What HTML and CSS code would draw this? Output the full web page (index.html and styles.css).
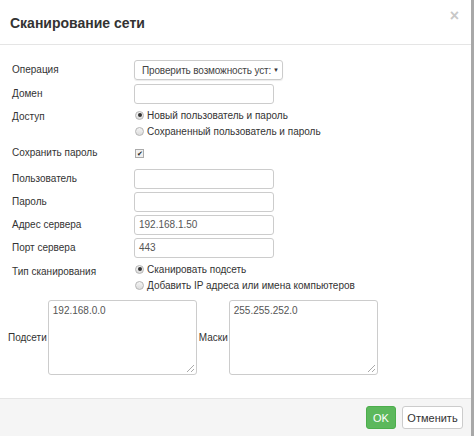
FILE: index.html
```html
<!DOCTYPE html>
<html lang="ru">
<head>
<meta charset="utf-8">
<link rel="stylesheet" href="styles.css">
</head>
<body>
<div class="dialog">
  <div class="header">
    <span class="title">Сканирование сети</span>
    <span class="close">×</span>
  </div>
  <div class="body">
    <div class="row r-op">
      <div class="label">Операция</div>
      <div class="select"><span class="sel-text">Проверить возможность уст:</span><span class="caret">▼</span></div>
    </div>
    <div class="row">
      <div class="label">Домен</div>
      <div class="input"></div>
    </div>
    <div class="row r-radio">
      <div class="label lab-radio">Доступ</div>
      <div class="radios">
        <div class="opt"><span class="radio on"></span>Новый пользователь и пароль</div>
        <div class="opt"><span class="radio"></span>Сохраненный пользователь и пароль</div>
      </div>
    </div>
    <div class="row r-check">
      <div class="label">Сохранить пароль</div>
      <div class="checkwrap"><span class="check">✔</span></div>
    </div>
    <div class="row r-user">
      <div class="label">Пользователь</div>
      <div class="input"></div>
    </div>
    <div class="row">
      <div class="label">Пароль</div>
      <div class="input"></div>
    </div>
    <div class="row">
      <div class="label">Адрес сервера</div>
      <div class="input">192.168.1.50</div>
    </div>
    <div class="row">
      <div class="label">Порт сервера</div>
      <div class="input">443</div>
    </div>
    <div class="row r-radio r-radio2">
      <div class="label lab-radio">Тип сканирования</div>
      <div class="radios">
        <div class="opt"><span class="radio on"></span>Сканировать подсеть</div>
        <div class="opt"><span class="radio"></span>Добавить IP адреса или имена компьютеров</div>
      </div>
    </div>
    <div class="areas">
      <span class="alabel">Подсети</span>
      <div class="textarea">192.168.0.0<span class="grip"></span></div>
      <span class="alabel">Маски</span>
      <div class="textarea">255.255.252.0<span class="grip"></span></div>
    </div>
  </div>
  <div class="footer">
    <button class="btn ok">OK</button>
    <button class="btn cancel">Отменить</button>
  </div>
</div>
</body>
</html>
```
FILE: styles.css
```css
html, body {
  margin: 0;
  padding: 0;
  background: #fff;
}
body {
  font-family: "Liberation Sans", Arial, sans-serif;
  font-size: 10px;
  color: #333;
}
.dialog {
  width: 471px;
  height: 436px;
  border-right: 3px solid #a8a8a8;
  display: flex;
  flex-direction: column;
  background: #fff;
}
.header {
  height: 45px;
  border-bottom: 1px solid #e5e5e5;
  display: flex;
  align-items: center;
  justify-content: space-between;
  padding: 0 12px 0 10px;
  box-sizing: border-box;
  flex: none;
}
.title {
  font-size: 14px;
  font-weight: bold;
  color: #333;
  margin-top: 2px;
}
.close {
  font-size: 16px;
  color: #c8c8c8;
  margin-top: -12px;
  font-weight: bold;
}
.body {
  flex: 1;
  padding: 15px 0 0 12px;
  display: flex;
  flex-direction: column;
  gap: 3px;
}
.row {
  display: grid;
  grid-template-columns: 122px 1fr;
  align-items: center;
  min-height: 20px;
}
.row .label {
  line-height: 20px;
}
.r-op { margin-bottom: 1px; }
.r-radio { align-items: start; }
.row .lab-radio { line-height: 16px; padding-top: 2px; }
.r-radio2 .lab-radio { padding-top: 3px; }
.r-check { margin-top: 1px; }
.r-user { margin-top: 3px; }
.select {
  width: 149px;
  height: 20px;
  box-sizing: border-box;
  border: 1px solid #ccc;
  border-radius: 3px;
  box-shadow: 0 1px 1px rgba(0,0,0,0.08);
  display: flex;
  align-items: center;
  padding: 0 5px 0 7px;
  overflow: hidden;
  white-space: nowrap;
}
.sel-text {
  flex: 1;
  color: #444;
  letter-spacing: -0.15px;
}
.caret {
  font-size: 6px;
  color: #333;
  margin-left: 2px;
}
.input {
  width: 140px;
  height: 20px;
  box-sizing: border-box;
  border: 1px solid #ccc;
  border-radius: 3px;
  padding: 0 4px;
  line-height: 18px;
  color: #555;
}
.radios {
  display: flex;
  flex-direction: column;
  margin-left: 1px;
}
.opt {
  height: 16px;
  display: flex;
  align-items: center;
  white-space: nowrap;
}
.r-radio2 .opt { height: 16.5px; }
.radio {
  width: 7px;
  height: 7px;
  border-radius: 50%;
  border: 1px solid #b5b5b5;
  background: linear-gradient(#f4f4f4, #dcdcdc);
  margin-right: 3px;
  position: relative;
  flex: none;
}
.radio.on::after {
  content: "";
  position: absolute;
  left: 1.5px;
  top: 1.5px;
  width: 4px;
  height: 4px;
  border-radius: 50%;
  background: #333;
}
.checkwrap {
  height: 18px;
  display: flex;
  align-items: center;
}
.check {
  width: 7px;
  height: 7px;
  border: 1px solid #aaa;
  background: #f0f0f0;
  font-size: 7px;
  line-height: 7px;
  text-align: center;
  color: #222;
  margin-left: 1px;
}
.areas {
  display: flex;
  align-items: center;
  margin-left: -4px;
  margin-top: 3px;
}
.alabel {
  margin-right: 1px;
}
.textarea {
  width: 149px;
  height: 75px;
  box-sizing: border-box;
  border: 1px solid #ccc;
  border-radius: 3px;
  padding: 4px 4px;
  color: #555;
  position: relative;
  margin-right: 2px;
}
.grip {
  position: absolute;
  right: 2px;
  bottom: 2px;
  width: 7px;
  height: 7px;
  background: linear-gradient(135deg, transparent 45%, #aaa 45%, #aaa 55%, transparent 55%, transparent 72%, #aaa 72%, #aaa 82%, transparent 82%);
}
.footer {
  flex: none;
  height: 38px;
  border-top: 1px solid #e5e5e5;
  background: #f5f5f5;
  display: flex;
  justify-content: flex-end;
  align-items: center;
  gap: 6px;
  padding-right: 8px;
  box-sizing: border-box;
}
.btn {
  font-family: "Liberation Sans", Arial, sans-serif;
  font-size: 11px;
  height: 23px;
  border-radius: 3px;
  padding: 0;
  box-sizing: border-box;
}
.ok {
  background: #5cb85c;
  border: 1px solid #4cae4c;
  color: #fff;
  width: 30px;
}
.cancel {
  background: #fff;
  border: 1px solid #ccc;
  color: #333;
  width: 61px;
}
```
